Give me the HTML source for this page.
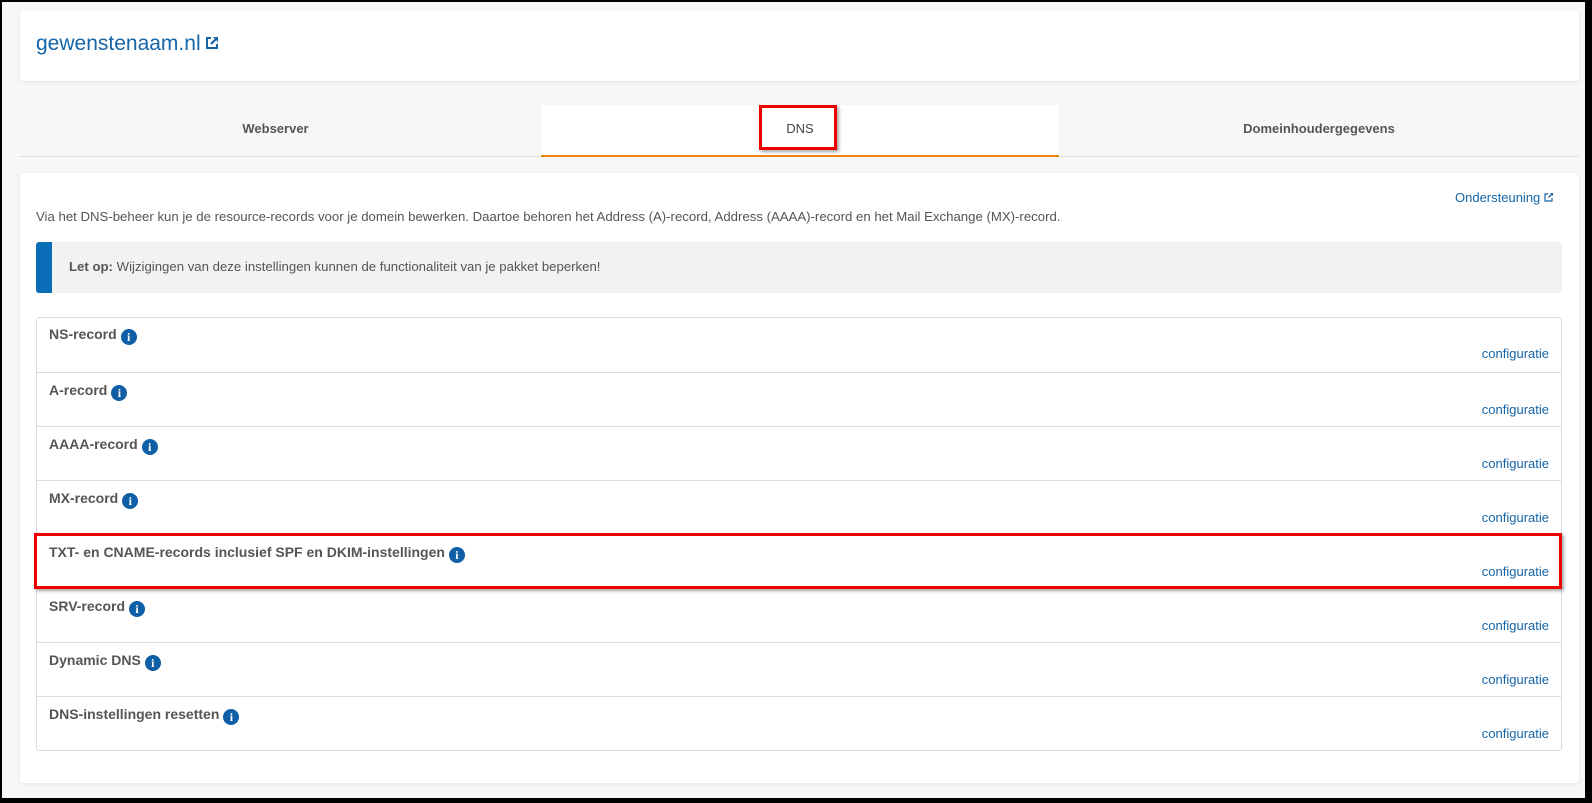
<!DOCTYPE html>
<html><head><meta charset="utf-8"><style>
*{box-sizing:border-box;margin:0;padding:0}
html,body{width:1592px;height:803px;overflow:hidden}
body{background:#f7f7f7;font-family:"Liberation Sans","DejaVu Sans",sans-serif;color:#555;position:relative}
.frame{position:absolute;left:0;top:0;width:1592px;height:803px;border-left:2px solid #000;border-top:2px solid #000;border-right:7px solid #000;border-bottom:5px solid #000;pointer-events:none;z-index:10}
.card{position:absolute;background:#fff;border-radius:4px;box-shadow:0 1px 4px rgba(0,0,0,.08)}
a{color:#1565a8;text-decoration:none}
.abs{position:absolute;white-space:nowrap}
.tabs{position:absolute;left:20px;top:105px;width:1559px;height:52px;border-bottom:1px solid #ddd}
.tab{position:absolute;top:0;height:52px;line-height:48px;text-align:center;font-size:13px;font-weight:bold;color:#555}
.list{position:absolute;left:36px;top:317px;width:1526px;height:434px;border:1px solid #ddd;border-radius:3px;background:#fff}
.row{position:absolute;left:0;width:1524px;height:54px;border-top:1px solid #ddd}
.row .t{position:absolute;left:12px;top:9px;font-size:14px;font-weight:bold;color:#555;white-space:nowrap}
.row .c{position:absolute;right:12px;top:29px;font-size:13px;color:#1565a8}
.i{display:inline-block;width:16px;height:16px;border-radius:50%;background:#0f5fa6;color:#fff;font:bold 12px/16px "Liberation Serif",serif;text-align:center;vertical-align:-2px;margin-left:4px}
.red{position:absolute;border:3px solid #e00;box-shadow:2px 2px 3px rgba(0,0,0,.35);z-index:5}
</style></head><body>
<div class="card" style="left:20px;top:10px;width:1559px;height:71px">
 <div class="abs" style="left:16px;top:22px;font-size:21px;color:#1565a8">gewenstenaam.nl<svg width="16" height="16" viewBox="0 0 16 16" style="margin-left:3px;vertical-align:-1px"><path d="M7 3H3v10h10V9" fill="none" stroke="#1565a8" stroke-width="2"/><path d="M9 2h5v5z" fill="#1565a8"/><path d="M13 3L7 9" stroke="#1565a8" stroke-width="2.2"/></svg></div>
</div>
<div class="tabs">
 <div class="tab" style="left:0;width:511px">Webserver</div>
 <div class="tab" style="left:521px;width:518px;background:#fff;border-bottom:2px solid #f0840c;font-weight:normal;color:#444">DNS</div>
 <div class="tab" style="left:1039px;width:520px">Domeinhoudergegevens</div>
</div>
<div class="red" style="left:759px;top:105px;width:78px;height:45px"></div>
<div class="card" style="left:20px;top:173px;width:1559px;height:610px"></div>
<div class="abs" style="left:1455px;top:190px;font-size:13px"><a>Ondersteuning <svg width="10" height="10" viewBox="0 0 10 10"><path d="M4 2H1v7h7V6" fill="none" stroke="#1565a8" stroke-width="1.2"/><path d="M6 1h3v3z" fill="#1565a8"/><path d="M8.5 1.5L4.5 5.5" stroke="#1565a8" stroke-width="1.3"/></svg></a></div>
<div class="abs" style="left:36px;top:209px;font-size:13.2px;color:#555">Via het DNS-beheer kun je de resource-records voor je domein bewerken. Daartoe behoren het Address (A)-record, Address (AAAA)-record en het Mail Exchange (MX)-record.</div>
<div class="abs" style="left:36px;top:242px;width:1526px;height:51px;background:#f2f2f2;border-radius:3px;overflow:hidden">
 <div style="position:absolute;left:0;top:0;width:16px;height:51px;background:#0a6db8"></div>
 <div style="position:absolute;left:33px;top:17px;font-size:13.2px;color:#555"><b>Let op:</b> Wijzigingen van deze instellingen kunnen de functionaliteit van je pakket beperken!</div>
</div>
<div class="list">
 <div class="row" style="top:-1px;border-top:none"><div class="t">NS-record<span class="i">i</span></div><div class="c">configuratie</div></div>
 <div class="row" style="top:54px"><div class="t">A-record<span class="i">i</span></div><div class="c">configuratie</div></div>
 <div class="row" style="top:108px"><div class="t">AAAA-record<span class="i">i</span></div><div class="c">configuratie</div></div>
 <div class="row" style="top:162px"><div class="t">MX-record<span class="i">i</span></div><div class="c">configuratie</div></div>
 <div class="row" style="top:216px"><div class="t">TXT- en CNAME-records inclusief SPF en DKIM-instellingen<span class="i">i</span></div><div class="c">configuratie</div></div>
 <div class="row" style="top:270px"><div class="t">SRV-record<span class="i">i</span></div><div class="c">configuratie</div></div>
 <div class="row" style="top:324px"><div class="t">Dynamic DNS<span class="i">i</span></div><div class="c">configuratie</div></div>
 <div class="row" style="top:378px"><div class="t">DNS-instellingen resetten<span class="i">i</span></div><div class="c">configuratie</div></div>
</div>
<div class="red" style="left:34px;top:533px;width:1528px;height:56px"></div>
<div class="frame"></div>
</body></html>
